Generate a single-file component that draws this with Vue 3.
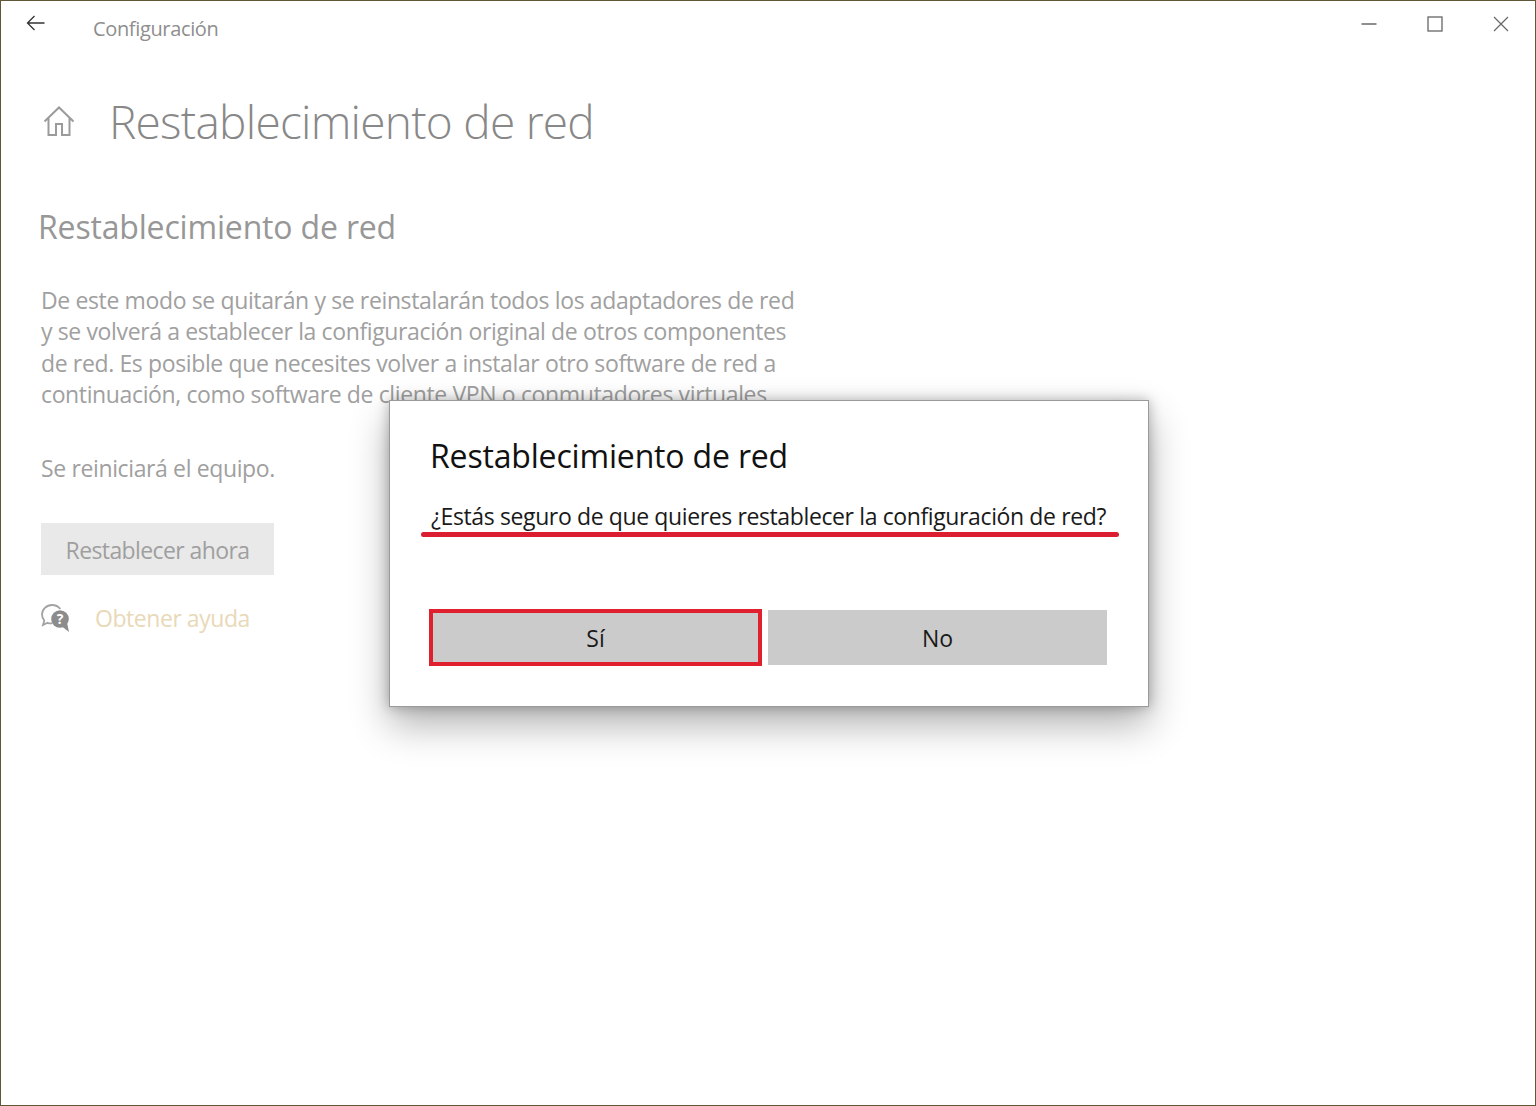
<script setup>
const paragraph = [
  'De este modo se quitarán y se reinstalarán todos los adaptadores de red',
  'y se volverá a establecer la configuración original de otros componentes',
  'de red. Es posible que necesites volver a instalar otro software de red a',
  'continuación, como software de cliente VPN o conmutadores virtuales.',
]
</script>

<template>
  <div class="window">
    <header class="titlebar">
      <div class="title-left">
        <svg class="back" width="20" height="16" viewBox="0 0 20 16" fill="none" stroke="#333" stroke-width="1.3">
          <path d="M18.5 8H1.5M8.5 1 1.5 8l7 7" />
        </svg>
        <span class="app-name">Configuración</span>
      </div>
      <div class="controls">
        <svg width="16" height="16" viewBox="0 0 16 16" fill="none" stroke="#444" stroke-width="1.2"><path d="M0.5 8h15" /></svg>
        <svg width="16" height="16" viewBox="0 0 16 16" fill="none" stroke="#666" stroke-width="1.3"><rect x="1" y="1" width="14" height="14" /></svg>
        <svg width="16" height="16" viewBox="0 0 16 16" fill="none" stroke="#666" stroke-width="1.2"><path d="M1 1l14 14M15 1 1 15" /></svg>
      </div>
    </header>

    <main class="content">
      <div class="page-head">
        <svg width="32" height="32" viewBox="0 0 32 32" fill="none" stroke="#9b9b9b" stroke-width="2">
          <path d="M1.5 16.5 16 2.500l14.500 14M5.500 13v17h7.500v-11h6v11h7.500V13" />
        </svg>
        <h1>Restablecimiento de red</h1>
      </div>
      <h2>Restablecimiento de red</h2>
      <p class="para">
        <span v-for="line in paragraph" :key="line" class="line">{{ line }}</span>
      </p>
      <p class="restart">Se reiniciará el equipo.</p>
      <div class="reset-btn">Restablecer ahora</div>
      <div class="help">
        <svg width="29" height="28" viewBox="0 0 29 28">
          <path d="M11.500 19.200c-1.500.3-3.500.2-5-.4L2 21l1.300-4.500C1.800 14.800 1 12.800 1 10.500 1 5.500 5.500 1 11 1c3.500 0 6.500 1.600 8.300 4" fill="none" stroke="#a3a3a3" stroke-width="1.800" />
          <circle cx="19" cy="15" r="8.800" fill="#8c8c8c" />
          <path d="M21 22.500 28 28l-1.800-8.500z" fill="#8c8c8c" />
          <text x="19" y="20" class="help-q">?</text>
        </svg>
        <span class="help-link">Obtener ayuda</span>
      </div>
    </main>

    <section class="dialog">
      <h3>Restablecimiento de red</h3>
      <p class="question">¿Estás seguro de que quieres restablecer la configuración de red?</p>
      <span class="underline"></span>
      <div class="actions">
        <div class="dlg-btn yes">Sí</div>
        <div class="dlg-btn no">No</div>
      </div>
    </section>
  </div>
</template>

<style>
html, body { margin: 0; background: #fff; }
</style>

<style scoped>
.window {
  position: relative;
  box-sizing: border-box;
  width: 1536px;
  height: 1106px;
  overflow: hidden;
  background: #fff;
  border: 1px solid #5e5838;
  font-family: "Open Sans", "Noto Sans", sans-serif;
}
.titlebar {
  display: flex;
  justify-content: space-between;
  align-items: center;
  height: 46px;
  padding: 0 26px 0 25px;
}
.title-left { display: flex; align-items: center; }
.back { margin-top: -2px; }
.app-name {
  margin-left: 47px;
  margin-top: 9px;
  font-size: 20px;
  color: #8e8e8e;
  letter-spacing: -0.35px;
}
.controls { display: flex; gap: 50px; margin-top: -1px; }
.content { padding: 0 0 0 40px; }
.page-head {
  display: flex;
  align-items: center;
  gap: 34px;
  height: 56px;
  margin-top: 46px;
  margin-left: 2px;
}
h1 {
  margin: 0;
  font-size: 46px;
  font-weight: 300;
  color: #888;
  letter-spacing: -0.74px;
  line-height: 56px;
}
h2 {
  margin: 0;
  margin-top: 56px;
  margin-left: -3px;
  font-size: 32px;
  font-weight: 400;
  color: #979797;
  letter-spacing: -0.17px;
  line-height: 44px;
}
.para {
  margin: 36px 0 0;
  font-size: 23px;
  color: #a0a0a0;
  letter-spacing: -0.37px;
  line-height: 31.3px;
}
.line { display: block; white-space: nowrap; }
.restart {
  margin: 42px 0 0;
  font-size: 23px;
  color: #a0a0a0;
  letter-spacing: -0.37px;
  line-height: 32px;
}
.reset-btn {
  display: flex;
  align-items: center;
  justify-content: center;
  width: 233px;
  height: 52px;
  margin-top: 39px;
  padding-top: 2px;
  box-sizing: border-box;
  background: #e9e9e9;
  font-size: 23px;
  color: #9f9f9f;
  letter-spacing: -0.6px;
}
.help { display: flex; align-items: center; gap: 25px; margin-top: 27px; }
.help-q { font-size: 14px; font-weight: 700; fill: #fff; text-anchor: middle; }
.help-link { font-size: 23px; color: #e8d9b8; letter-spacing: -0.45px; }
.dialog {
  position: absolute;
  left: 388px;
  top: 399px;
  box-sizing: border-box;
  width: 760px;
  height: 307px;
  padding: 33px 40px 0 40px;
  background: #fff;
  border: 1px solid #9a9a9a;
  box-shadow: 0 18px 36px rgba(0, 0, 0, 0.3), 0 0 12px rgba(0, 0, 0, 0.28);
}
h3 {
  margin: 0;
  font-size: 32px;
  font-weight: 400;
  color: #111;
  letter-spacing: -0.17px;
  line-height: 44px;
}
.question {
  margin: 22px 0 0 1px;
  font-size: 23px;
  color: #1a1a1a;
  letter-spacing: -0.38px;
  line-height: 32px;
  white-space: nowrap;
}
.underline {
  position: absolute;
  left: 31px;
  top: 131px;
  width: 698px;
  height: 5px;
  border-radius: 3px;
  background: #dc1f30;
}
.actions { display: flex; gap: 6px; margin-top: 78px; margin-left: -1px; }
.dlg-btn {
  display: flex;
  align-items: center;
  justify-content: center;
  box-sizing: border-box;
  height: 55px;
  background: #cbcbcb;
  font-size: 23px;
  color: #1a1a1a;
}
.yes { width: 333px; height: 57px; margin-top: -1px; border: 4px solid #e0202f; }
.no { width: 339px; }
</style>
